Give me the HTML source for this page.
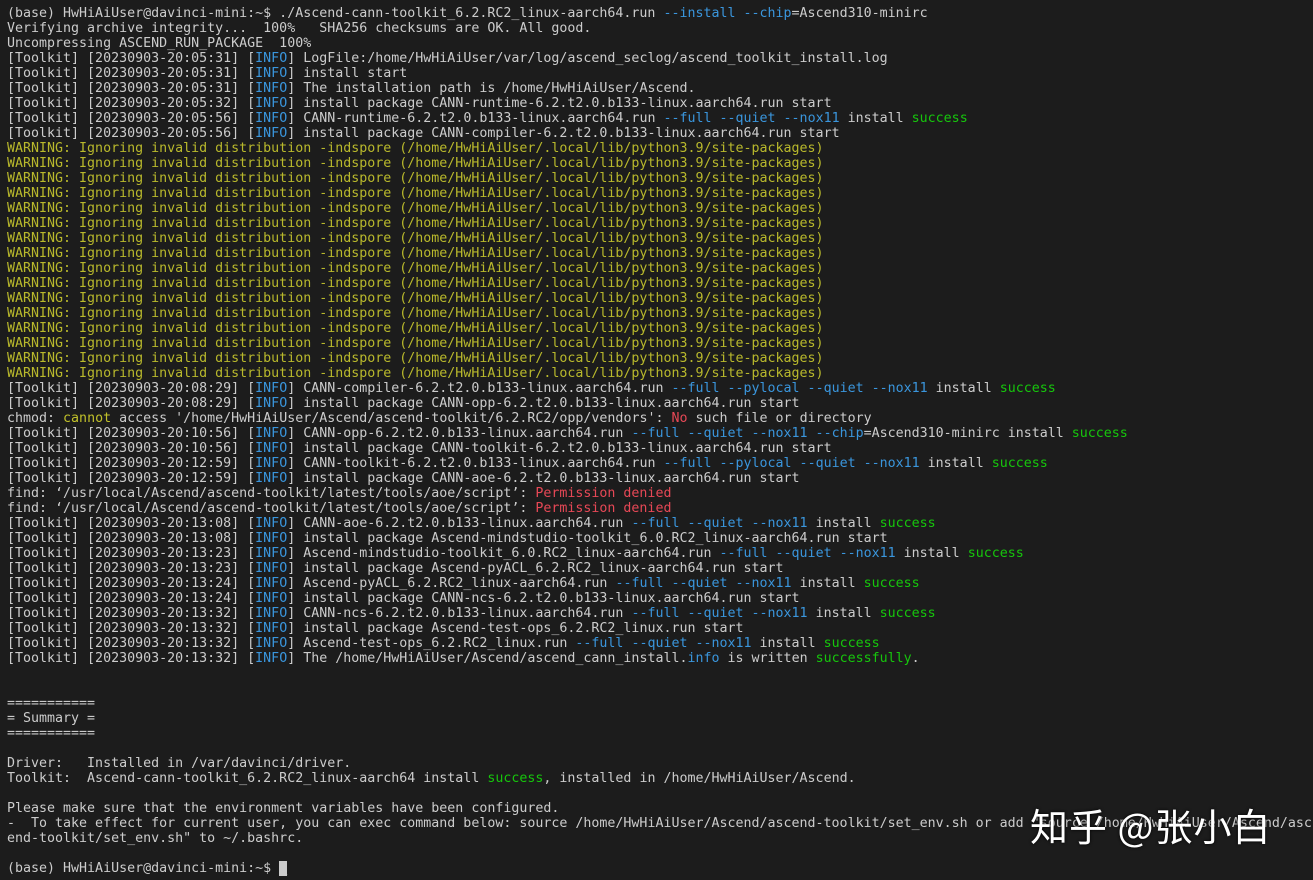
<!DOCTYPE html>
<html><head><meta charset="utf-8">
<style>
html,body{margin:0;padding:0;background:#1c1c1c;width:1313px;height:880px;overflow:hidden}
pre{margin:0;position:absolute;left:7px;top:6px;font-family:"DejaVu Sans Mono","Liberation Mono",monospace;font-size:13.3px;line-height:15px;color:#cccccc;white-space:pre}
.b{color:#3a96dd}.g{color:#16c60c}.y{color:#c1c12a}.r{color:#e74856}.w{color:#b9b92c}
.wm{position:absolute;left:1030px;top:797px;font-family:"Noto Sans CJK SC","WenQuanYi Zen Hei",sans-serif;font-size:38px;color:#fff;letter-spacing:1px;text-shadow:0 0 3px #000;white-space:nowrap}
.cur{background:#cccccc;color:#cccccc}
</style></head><body>
<pre>(base) HwHiAiUser@davinci-mini:~$ ./Ascend-cann-toolkit_6.2.RC2_linux-aarch64.run <span class="b">--install --chip</span>=Ascend310-minirc
Verifying archive integrity...  100%   SHA256 checksums are OK. All good.
Uncompressing ASCEND_RUN_PACKAGE  100%
[Toolkit] [20230903-20:05:31] [<span class="b">INFO</span>] LogFile:/home/HwHiAiUser/var/log/ascend_seclog/ascend_toolkit_install.log
[Toolkit] [20230903-20:05:31] [<span class="b">INFO</span>] install start
[Toolkit] [20230903-20:05:31] [<span class="b">INFO</span>] The installation path is /home/HwHiAiUser/Ascend.
[Toolkit] [20230903-20:05:32] [<span class="b">INFO</span>] install package CANN-runtime-6.2.t2.0.b133-linux.aarch64.run start
[Toolkit] [20230903-20:05:56] [<span class="b">INFO</span>] CANN-runtime-6.2.t2.0.b133-linux.aarch64.run <span class="b">--full --quiet --nox11</span> install <span class="g">success</span>
[Toolkit] [20230903-20:05:56] [<span class="b">INFO</span>] install package CANN-compiler-6.2.t2.0.b133-linux.aarch64.run start
<span class="w">WARNING: Ignoring invalid distribution -indspore (/home/HwHiAiUser/.local/lib/python3.9/site-packages)
WARNING: Ignoring invalid distribution -indspore (/home/HwHiAiUser/.local/lib/python3.9/site-packages)
WARNING: Ignoring invalid distribution -indspore (/home/HwHiAiUser/.local/lib/python3.9/site-packages)
WARNING: Ignoring invalid distribution -indspore (/home/HwHiAiUser/.local/lib/python3.9/site-packages)
WARNING: Ignoring invalid distribution -indspore (/home/HwHiAiUser/.local/lib/python3.9/site-packages)
WARNING: Ignoring invalid distribution -indspore (/home/HwHiAiUser/.local/lib/python3.9/site-packages)
WARNING: Ignoring invalid distribution -indspore (/home/HwHiAiUser/.local/lib/python3.9/site-packages)
WARNING: Ignoring invalid distribution -indspore (/home/HwHiAiUser/.local/lib/python3.9/site-packages)
WARNING: Ignoring invalid distribution -indspore (/home/HwHiAiUser/.local/lib/python3.9/site-packages)
WARNING: Ignoring invalid distribution -indspore (/home/HwHiAiUser/.local/lib/python3.9/site-packages)
WARNING: Ignoring invalid distribution -indspore (/home/HwHiAiUser/.local/lib/python3.9/site-packages)
WARNING: Ignoring invalid distribution -indspore (/home/HwHiAiUser/.local/lib/python3.9/site-packages)
WARNING: Ignoring invalid distribution -indspore (/home/HwHiAiUser/.local/lib/python3.9/site-packages)
WARNING: Ignoring invalid distribution -indspore (/home/HwHiAiUser/.local/lib/python3.9/site-packages)
WARNING: Ignoring invalid distribution -indspore (/home/HwHiAiUser/.local/lib/python3.9/site-packages)
WARNING: Ignoring invalid distribution -indspore (/home/HwHiAiUser/.local/lib/python3.9/site-packages)</span>
[Toolkit] [20230903-20:08:29] [<span class="b">INFO</span>] CANN-compiler-6.2.t2.0.b133-linux.aarch64.run <span class="b">--full --pylocal --quiet --nox11</span> install <span class="g">success</span>
[Toolkit] [20230903-20:08:29] [<span class="b">INFO</span>] install package CANN-opp-6.2.t2.0.b133-linux.aarch64.run start
chmod: <span class="y">cannot</span> access '/home/HwHiAiUser/Ascend/ascend-toolkit/6.2.RC2/opp/vendors': <span class="r">No</span> such file or directory
[Toolkit] [20230903-20:10:56] [<span class="b">INFO</span>] CANN-opp-6.2.t2.0.b133-linux.aarch64.run <span class="b">--full --quiet --nox11 --chip</span>=Ascend310-minirc install <span class="g">success</span>
[Toolkit] [20230903-20:10:56] [<span class="b">INFO</span>] install package CANN-toolkit-6.2.t2.0.b133-linux.aarch64.run start
[Toolkit] [20230903-20:12:59] [<span class="b">INFO</span>] CANN-toolkit-6.2.t2.0.b133-linux.aarch64.run <span class="b">--full --pylocal --quiet --nox11</span> install <span class="g">success</span>
[Toolkit] [20230903-20:12:59] [<span class="b">INFO</span>] install package CANN-aoe-6.2.t2.0.b133-linux.aarch64.run start
find: ‘/usr/local/Ascend/ascend-toolkit/latest/tools/aoe/script’: <span class="r">Permission denied</span>
find: ‘/usr/local/Ascend/ascend-toolkit/latest/tools/aoe/script’: <span class="r">Permission denied</span>
[Toolkit] [20230903-20:13:08] [<span class="b">INFO</span>] CANN-aoe-6.2.t2.0.b133-linux.aarch64.run <span class="b">--full --quiet --nox11</span> install <span class="g">success</span>
[Toolkit] [20230903-20:13:08] [<span class="b">INFO</span>] install package Ascend-mindstudio-toolkit_6.0.RC2_linux-aarch64.run start
[Toolkit] [20230903-20:13:23] [<span class="b">INFO</span>] Ascend-mindstudio-toolkit_6.0.RC2_linux-aarch64.run <span class="b">--full --quiet --nox11</span> install <span class="g">success</span>
[Toolkit] [20230903-20:13:23] [<span class="b">INFO</span>] install package Ascend-pyACL_6.2.RC2_linux-aarch64.run start
[Toolkit] [20230903-20:13:24] [<span class="b">INFO</span>] Ascend-pyACL_6.2.RC2_linux-aarch64.run <span class="b">--full --quiet --nox11</span> install <span class="g">success</span>
[Toolkit] [20230903-20:13:24] [<span class="b">INFO</span>] install package CANN-ncs-6.2.t2.0.b133-linux.aarch64.run start
[Toolkit] [20230903-20:13:32] [<span class="b">INFO</span>] CANN-ncs-6.2.t2.0.b133-linux.aarch64.run <span class="b">--full --quiet --nox11</span> install <span class="g">success</span>
[Toolkit] [20230903-20:13:32] [<span class="b">INFO</span>] install package Ascend-test-ops_6.2.RC2_linux.run start
[Toolkit] [20230903-20:13:32] [<span class="b">INFO</span>] Ascend-test-ops_6.2.RC2_linux.run <span class="b">--full --quiet --nox11</span> install <span class="g">success</span>
[Toolkit] [20230903-20:13:32] [<span class="b">INFO</span>] The /home/HwHiAiUser/Ascend/ascend_cann_install.<span class="b">info</span> is written <span class="g">successfully</span>.


===========
= Summary =
===========

Driver:   Installed in /var/davinci/driver.
Toolkit:  Ascend-cann-toolkit_6.2.RC2_linux-aarch64 install <span class="g">success</span>, installed in /home/HwHiAiUser/Ascend.

Please make sure that the environment variables have been configured.
-  To take effect for current user, you can exec command below: source /home/HwHiAiUser/Ascend/ascend-toolkit/set_env.sh or add "source /home/HwHiAiUser/Ascend/asc
end-toolkit/set_env.sh" to ~/.bashrc.

(base) HwHiAiUser@davinci-mini:~$ <span class="cur">_</span></pre>
<div class="wm">知乎 @张小白</div>
</body></html>
